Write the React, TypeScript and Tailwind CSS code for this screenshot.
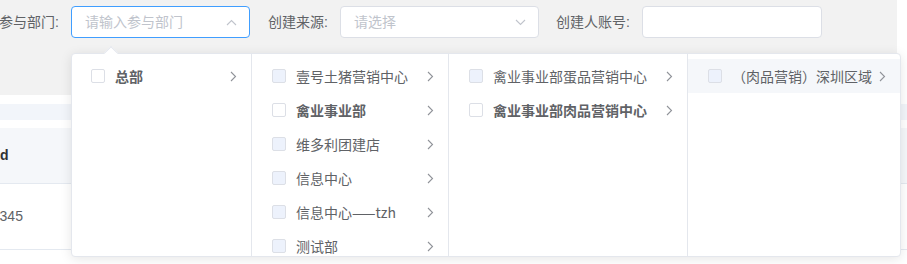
import React from "react";

type Item = { label: string; bold?: boolean; disabled?: boolean; active?: boolean };

const columns: { width: string; pad: string; items: Item[] }[] = [
    { width: "w-[180px]", pad: "pl-[19px]", items: [{ label: "总部", bold: true }] },
    {
        width: "w-[197px]",
        pad: "pl-[20px]",
        items: [
            { label: "壹号土猪营销中心", disabled: true },
            { label: "禽业事业部", bold: true },
            { label: "维多利团建店", disabled: true },
            { label: "信息中心", disabled: true },
            { label: "信息中心——tzh", disabled: true },
            { label: "测试部", disabled: true },
        ],
    },
    {
        width: "w-[239px]",
        pad: "pl-[20px]",
        items: [
            { label: "禽业事业部蛋品营销中心", disabled: true },
            { label: "禽业事业部肉品营销中心", bold: true },
        ],
    },
    {
        width: "flex-1",
        pad: "pl-[20px]",
        items: [{ label: "（肉品营销）深圳区域", disabled: true, active: true }],
    },
];

const ChevronRight = () => (
    <svg width="7" height="11" viewBox="0 0 7 11" className="shrink-0 mr-[14px]">
        <path d="M1 1l4.5 4.5L1 10" fill="none" stroke="#909399" strokeWidth="1.1" />
    </svg>
);

const Chevron = ({ up }: { up?: boolean }) => (
    <svg width="11" height="7" viewBox="0 0 11 7" className="shrink-0">
        <path d={up ? "M1 6l4.5-4.5L10 6" : "M1 1l4.5 4.5L10 1"} fill="none" stroke="#c0c4cc" strokeWidth="1.1" />
    </svg>
);

const Label = ({ text, width }: { text: string; width: string }) => (
    <div className={`${width} flex justify-end pr-[12px] text-[14px] text-[#606266] whitespace-nowrap shrink-0`}>
        <span>{text}</span>
    </div>
);

export default function App() {
    return (
        <div
            className="relative w-[907px] h-[264px] bg-white overflow-hidden"
            style={{ fontFamily: '"Liberation Sans", "Noto Sans CJK SC", sans-serif' }}
        >
            <div className="w-[897px] h-[95px] bg-[#f2f2f2] pt-[6px]">
                <div className="flex items-center">
                    <Label text="参与部门:" width="w-[71px]" />
                    <div className="w-[179px] h-[32px] rounded-[4px] border border-[#409eff] bg-white flex items-center pl-[13px] pr-[12px]">
                        <span className="flex-1 text-[14px] text-[#c0c4cc]">请输入参与部门</span>
                        <Chevron up />
                    </div>
                    <div className="w-[18px]" />
                    <Label text="创建来源:" width="w-[72px]" />
                    <div className="w-[199px] h-[32px] rounded-[4px] border border-[#dcdfe6] bg-white flex items-center pl-[13px] pr-[12px]">
                        <span className="flex-1 text-[14px] text-[#c0c4cc]">请选择</span>
                        <Chevron />
                    </div>
                    <div className="w-[17px]" />
                    <Label text="创建人账号:" width="w-[86px]" />
                    <div className="w-[180px] h-[32px] rounded-[4px] border border-[#dcdfe6] bg-white" />
                </div>
            </div>

            <div className="pt-[9px]">
                <div className="h-[16px] bg-[#f2f5fa]" />
                <div className="h-[8px]" />
                <div className="h-[56px] bg-[#f5f7fa] border-b border-[#e4e9f0] flex items-center">
                    <span className="ml-[-4px] text-[14px] font-bold text-[#303133]">Id</span>
                </div>
                <div className="h-[66px] border-b border-[#e4e9f0] flex items-center">
                    <span className="ml-[-16px] text-[14px] text-[#606266]">12345</span>
                </div>
            </div>

            <div className="absolute left-[71px] top-[53px] w-[830px] h-[204px] bg-white border border-[#e4e7ed] rounded-[4px] shadow-[0_2px_12px_0_rgba(0,0,0,0.1)]">
                <div className="absolute left-[34px] top-[-6px] w-[10px] h-[10px] rotate-45 bg-white border-l border-t border-[#e4e7ed]" />
                <div className="relative flex h-full">
                    {columns.map((col, ci) => (
                        <div
                            key={ci}
                            className={`${col.width} h-full pt-[5px] ${ci < columns.length - 1 ? "border-r border-[#e4e7ed]" : ""} overflow-hidden`}
                        >
                            {col.items.map((it) => (
                                <div
                                    key={it.label}
                                    className={`h-[34px] flex items-center ${col.pad} ${it.active ? "bg-[#f5f7fa]" : ""}`}
                                >
                                    <span
                                        className={`w-[14px] h-[14px] shrink-0 rounded-[2px] border border-[#dcdfe6] ${it.disabled ? "bg-[#edf2fc]" : "bg-white"}`}
                                    />
                                    <span
                                        className={`flex-1 ml-[10px] text-[14px] whitespace-nowrap ${it.bold ? "font-bold text-[#606266]" : "text-[#606266]"}`}
                                        style={{ fontFamily: '"Noto Sans CJK SC", "Liberation Sans", sans-serif' }}
                                    >
                                        {it.label}
                                    </span>
                                    <ChevronRight />
                                </div>
                            ))}
                        </div>
                    ))}
                </div>
            </div>
        </div>
    );
}
